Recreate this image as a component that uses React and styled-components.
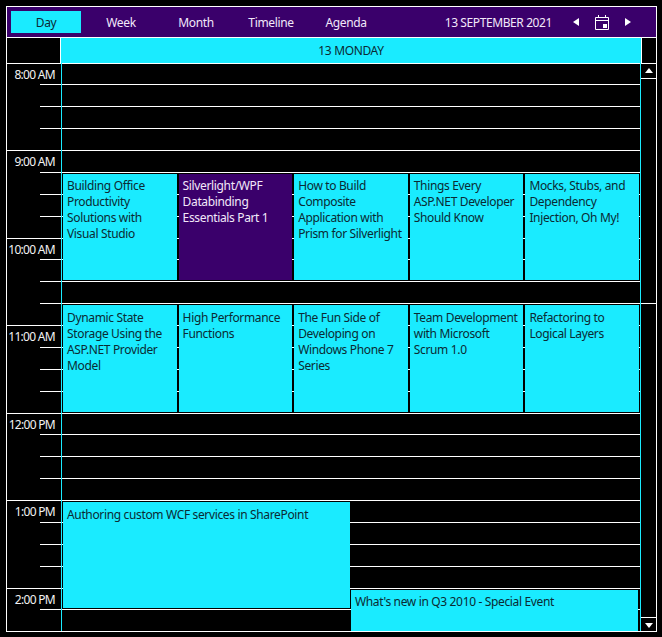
import styled, { createGlobalStyle } from "styled-components";

const GlobalStyle = createGlobalStyle`
    html, body {
        margin: 0;
        padding: 0;
        background: #000000;
    }
    body {
        font-family: "Noto Sans", "Open Sans", sans-serif;
        font-size: 12px;
        letter-spacing: -0.35px;
    }
`;

const tabs = ["Day", "Week", "Month", "Timeline", "Agenda"];
const hours = ["8:00 AM", "9:00 AM", "10:00 AM", "11:00 AM", "12:00 PM", "1:00 PM", "2:00 PM"];

const events = [
    { title: "Building Office Productivity Solutions with Visual Studio", col: 1, span: 2, row: 6, rows: 5 },
    { title: "Silverlight/WPF Databinding Essentials Part 1", col: 3, span: 2, row: 6, rows: 5, selected: true },
    { title: "How to Build Composite Application with Prism for Silverlight", col: 5, span: 2, row: 6, rows: 5 },
    { title: "Things Every ASP.NET Developer Should Know", col: 7, span: 2, row: 6, rows: 5 },
    { title: "Mocks, Stubs, and Dependency Injection, Oh My!", col: 9, span: 2, row: 6, rows: 5 },
    { title: "Dynamic State Storage Using the ASP.NET Provider Model", col: 1, span: 2, row: 12, rows: 5 },
    { title: "High Performance Functions", col: 3, span: 2, row: 12, rows: 5 },
    { title: "The Fun Side of Developing on Windows Phone 7 Series", col: 5, span: 2, row: 12, rows: 5 },
    { title: "Team Development with Microsoft Scrum 1.0", col: 7, span: 2, row: 12, rows: 5 },
    { title: "Refactoring to Logical Layers", col: 9, span: 2, row: 12, rows: 5 },
    { title: "Authoring custom WCF services in SharePoint", col: 1, span: 5, row: 21, rows: 5 },
    { title: "What's new in Q3 2010 - Special Event", col: 6, span: 5, row: 25, rows: 2, flush: true },
];

function CalendarIcon() {
    return (
        <svg width="14" height="15" viewBox="0 0 14 15" fill="none">
            <path d="M0.5 2.5H13.5V14.5H0.5Z" stroke="#fff" />
            <path d="M0 5.5H14" stroke="#fff" />
            <path d="M3.5 0V3M10.5 0V3" stroke="#fff" />
            <rect x="8" y="9" width="4" height="4" fill="#fff" />
        </svg>
    );
}

export default function App() {
    return (
        <>
            <GlobalStyle />
            <Scheduler>
                <Toolbar>
                    <Tabs>
                        {tabs.map((tab) => (
                            <Tab key={tab} $active={tab === "Day"}>{tab}</Tab>
                        ))}
                    </Tabs>
                    <DateNav>
                        <DateText>13 SEPTEMBER 2021</DateText>
                        <Arrow $dir="left" />
                        <CalendarIcon />
                        <Arrow $dir="right" />
                    </DateNav>
                </Toolbar>
                <DayHeader>
                    <Corner />
                    <DayTitle>13 MONDAY</DayTitle>
                    <HeaderGutter />
                </DayHeader>
                <Body>
                    <TimeColumn>
                        {hours.map((hour, i) => (
                            <HourBlock key={hour}>
                                <HourLabel>{hour}</HourLabel>
                                {(i === hours.length - 1 ? [1] : [1, 2, 3]).map((n) => (
                                    <Tick key={n} />
                                ))}
                            </HourBlock>
                        ))}
                    </TimeColumn>
                    <DayColumn>
                        <SlotLines>
                            {Array.from({ length: 26 }, (_, i) => (
                                <SlotLine key={i} />
                            ))}
                        </SlotLines>
                        <EventLayer>
                            {events.map((event) => (
                                <Event
                                    key={event.title}
                                    $col={event.col}
                                    $span={event.span}
                                    $row={event.row}
                                    $rows={event.rows}
                                    $selected={event.selected}
                                    $flush={event.flush}
                                >
                                    {event.title}
                                </Event>
                            ))}
                        </EventLayer>
                    </DayColumn>
                    <Scrollbar>
                        <ScrollButton $dir="up"><ScrollArrow $dir="up" /></ScrollButton>
                        <ScrollThumb />
                        <ScrollTrack />
                        <ScrollButton $dir="down"><ScrollArrow $dir="down" /></ScrollButton>
                    </Scrollbar>
                </Body>
            </Scheduler>
        </>
    );
}

const Scheduler = styled.div`
    box-sizing: border-box;
    width: 651px;
    height: 626px;
    margin: 6px 0 0 6px;
    border: 1px solid #FFFFFF;
    display: flex;
    flex-direction: column;
    background: #000000;
    overflow: hidden;
`;

const Toolbar = styled.div`
    box-sizing: border-box;
    height: 31px;
    flex: none;
    background: #3A006B;
    border-bottom: 1px solid #FFFFFF;
    padding: 4px 25px 4px 4px;
    display: flex;
    justify-content: space-between;
    align-items: center;
`;

const Tabs = styled.div`
    display: flex;
    gap: 5px;
`;

const Tab = styled.div`
    width: 70px;
    height: 22px;
    line-height: 23px;
    text-align: center;
    color: ${(p) => (p.$active ? "#0B2A33" : "#F2E8FA")};
    background: ${(p) => (p.$active ? "#1AEBFF" : "transparent")};
`;

const DateNav = styled.div`
    display: flex;
    align-items: center;
`;

const DateText = styled.div`
    color: #F2E8FA;
    letter-spacing: -0.4px;
    line-height: 23px;
    margin-right: 21px;
`;

const Arrow = styled.div`
    width: 0;
    height: 0;
    border-top: 4px solid transparent;
    border-bottom: 4px solid transparent;
    ${(p) => (p.$dir === "left"
        ? "border-right: 6px solid #FFFFFF; margin-right: 16px;"
        : "border-left: 6px solid #FFFFFF; margin-left: 16px;")}
`;

const DayHeader = styled.div`
    height: 24.5px;
    flex: none;
    display: grid;
    grid-template-columns: 54px 1fr 15px;
`;

const Corner = styled.div`
    border-right: 1px solid #FFFFFF;
`;

const DayTitle = styled.div`
    background: #1AEBFF;
    color: #0B2A33;
    text-align: center;
    line-height: 26px;
`;

const HeaderGutter = styled.div`
    border-left: 1px solid #FFFFFF;
`;

const Body = styled.div`
    height: 568.75px;
    flex: none;
    display: grid;
    grid-template-columns: 55px 1fr 15px;
`;

const TimeColumn = styled.div`
    display: flex;
    flex-direction: column;
    border-right: 1px solid #1AEBFF;
    color: #F2F2F2;
`;

const HourBlock = styled.div`
    flex: none;
    display: flex;
    flex-direction: column;
    border-top: 1px solid #FFFFFF;
`;

const HourLabel = styled.div`
    height: 20.875px;
    flex: none;
    box-sizing: border-box;
    padding: 3px 6px 0 0;
    text-align: right;
    white-space: nowrap;
    line-height: 16px;
    letter-spacing: -0.7px;
`;

const Tick = styled.div`
    height: 21.875px;
    flex: none;
    box-sizing: border-box;
    margin-left: 33px;
    border-top: 1px solid #FFFFFF;
`;

const DayColumn = styled.div`
    position: relative;
    border-right: 1px solid #1AEBFF;
`;

const SlotLines = styled.div`
    display: grid;
    grid-template-rows: repeat(26, 21.875px);
`;

const SlotLine = styled.div`
    box-sizing: border-box;
    border-top: 1px solid #FFFFFF;
`;

const EventLayer = styled.div`
    position: absolute;
    inset: 0;
    display: grid;
    grid-template-columns: repeat(10, 1fr);
    grid-template-rows: repeat(26, 21.875px);
`;

const Event = styled.div`
    grid-column: ${(p) => p.$col} / span ${(p) => p.$span};
    grid-row: ${(p) => p.$row} / span ${(p) => p.$rows};
    margin: ${(p) => (p.$flush ? "2px 2px 0 0" : "2px 1px 1px 1px")};
    padding: 4.55px 4px 3px;
    line-height: 16px;
    overflow: hidden;
    color: ${(p) => (p.$selected ? "#F2E8FA" : "#0B2A33")};
    background: ${(p) => (p.$selected ? "#3A006B" : "#1AEBFF")};
`;

const Scrollbar = styled.div`
    display: flex;
    flex-direction: column;
    border-top: 1px solid #FFFFFF;
    height: 568.5px;
`;

const ScrollButton = styled.div`
    box-sizing: border-box;
    height: 15px;
    flex: none;
    display: flex;
    align-items: center;
    justify-content: center;
    ${(p) => (p.$dir === "up" ? "border-bottom" : "border-top")}: 1px solid #FFFFFF;
`;

const ScrollArrow = styled.div`
    width: 0;
    height: 0;
    border-left: 4px solid transparent;
    border-right: 4px solid transparent;
    ${(p) => (p.$dir === "up" ? "border-bottom" : "border-top")}: 5px solid #FFFFFF;
`;

const ScrollThumb = styled.div`
    height: 224px;
    flex: none;
    border-bottom: 1px solid #FFFFFF;
`;

const ScrollTrack = styled.div`
    flex: 1;
`;
